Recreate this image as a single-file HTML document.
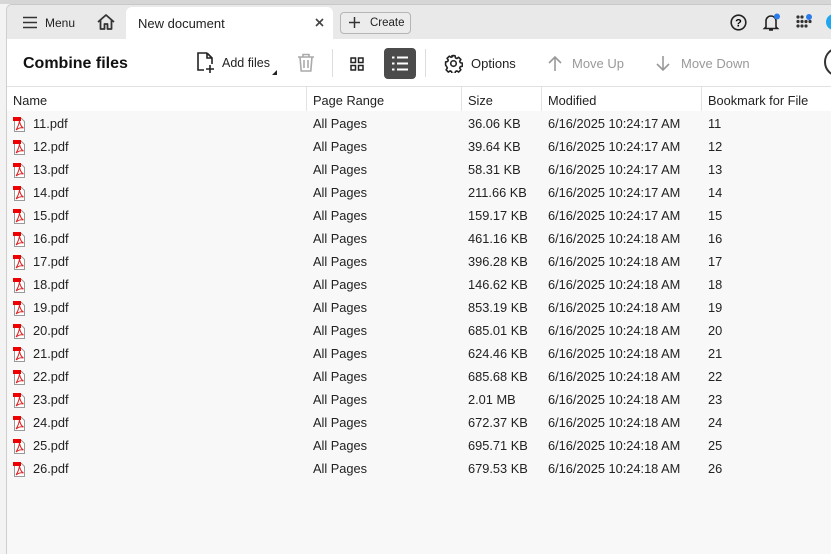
<!DOCTYPE html>
<html><head><meta charset="utf-8"><style>
*{margin:0;padding:0;box-sizing:border-box}
body{width:831px;height:547px;overflow:hidden;background:#f3f3f3;font-family:"Liberation Sans",sans-serif;position:relative;color:#222}
.abs{position:absolute}
#win{position:absolute;left:6px;top:4px;width:830px;height:550px;background:#f8f8f8;border-left:1px solid #cfcfcf;border-top:1px solid #c8c8c8;border-radius:6px 0 0 0;overflow:hidden}
#tabbar{position:absolute;left:0;top:0;width:100%;height:34px;background:#e9e9e9}
#tool{position:absolute;left:0;top:34px;width:100%;height:48px;background:#fff;border-bottom:1px solid #e1e1e1}
#hdr{position:absolute;left:0;top:82px;width:100%;height:24px;background:#fff}
.t{position:absolute;font-size:12.8px;white-space:nowrap}
.div{position:absolute;top:82px;width:1px;height:24px;background:#e3e3e3}
.ic{position:absolute;left:6px;width:13px;height:16px}
</style></head><body>
<div class="abs" style="left:0;top:0;width:831px;height:4px;background:#d6d6d6"></div>
<div id="win">
<div id="tabbar">
 <svg class="abs" style="left:15px;top:11px" width="16" height="13"><path d="M1 1.5h14M1 6.5h14M1 11.5h14" stroke="#333" stroke-width="1.6"/></svg>
 <div class="t" style="left:38px;top:11px;font-size:12px">Menu</div>
 <svg class="abs" style="left:89px;top:8px" width="20" height="18"><path d="M2 9L10 2l8 7M4.5 7v9h4v-5h3v5h4V7" fill="none" stroke="#333" stroke-width="1.8" stroke-linejoin="round"/></svg>
 <div class="abs" style="left:119px;top:2px;width:207px;height:33px;background:#fff;border-radius:6px 6px 0 0"></div>
 <div class="t" style="left:131px;top:11px;font-size:13px">New document</div>
 <svg class="abs" style="left:308px;top:13px" width="9" height="9"><path d="M1 1l7 7M8 1L1 8" stroke="#444" stroke-width="1.6"/></svg>
 <div class="abs" style="left:333px;top:7px;width:71px;height:22px;border:1px solid #b5b5b5;border-radius:4px;background:#ececec"></div>
 <svg class="abs" style="left:342px;top:12px" width="11" height="11"><path d="M5.5 0v11M0 5.5h11" stroke="#333" stroke-width="1.5"/></svg>
 <div class="t" style="left:363px;top:12px;font-size:11.5px">Create</div>
 <svg class="abs" style="left:723px;top:9px" width="17" height="17"><circle cx="8.5" cy="8.5" r="7.3" fill="none" stroke="#222" stroke-width="1.6"/><text x="8.5" y="12.5" font-size="11" font-weight="bold" text-anchor="middle" font-family="Liberation Sans">?</text></svg>
 <svg class="abs" style="left:755px;top:8px" width="20" height="20"><path d="M4 14V8a5 5 0 0 1 10 0v6l1.5 1.5h-13zM7 17h4" fill="none" stroke="#222" stroke-width="1.6"/><circle cx="15" cy="3.5" r="3" fill="#2b7ce9"/></svg>
 <svg class="abs" style="left:789px;top:9px" width="18" height="18"><g fill="#333"><circle cx="2" cy="3" r="1.6"/><circle cx="6" cy="3" r="1.6"/><circle cx="2" cy="7.5" r="1.6"/><circle cx="6" cy="7.5" r="1.6"/><circle cx="10" cy="7.5" r="1.6"/><circle cx="14" cy="7.5" r="1.6"/><circle cx="2" cy="12" r="1.6"/><circle cx="6" cy="12" r="1.6"/><circle cx="10" cy="12" r="1.6"/></g><circle cx="13" cy="3" r="3" fill="#2b7ce9"/></svg>
 <div class="abs" style="left:819px;top:9px;width:16px;height:16px;border-radius:50%;background:#1ea7f0"></div>
</div>
<div id="tool">
 <div class="t" style="left:16px;top:16px;font-size:16px;font-weight:bold;color:#111">Combine files</div>
 <svg class="abs" style="left:189px;top:13px" width="20" height="22"><path d="M11 1H2v17h6M11 1l5 5v6M11 1v5h5" fill="none" stroke="#222" stroke-width="1.6"/><path d="M14 13v8M10 17h8" stroke="#222" stroke-width="1.6"/></svg>
 <div class="t" style="left:215px;top:17px;font-size:12.5px">Add files</div>
 <svg class="abs" style="left:265px;top:31px" width="5" height="5"><path d="M5 0v5H0z" fill="#222"/></svg>
 <svg class="abs" style="left:290px;top:14px" width="18" height="20"><path d="M1 4h16M6 4V1.5h6V4M3 4l1.2 14h9.6L15 4M7 7v8M11 7v8" fill="none" stroke="#aaa" stroke-width="1.6"/></svg>
 <div class="abs" style="left:325px;top:10px;width:1px;height:28px;background:#ddd"></div>
 <svg class="abs" style="left:343px;top:18px" width="14" height="14"><g fill="none" stroke="#222" stroke-width="1.5"><rect x="1" y="1" width="4.5" height="4.5"/><rect x="8.5" y="1" width="4.5" height="4.5"/><rect x="1" y="8.5" width="4.5" height="4.5"/><rect x="8.5" y="8.5" width="4.5" height="4.5"/></g></svg>
 <div class="abs" style="left:377px;top:9px;width:32px;height:31px;background:#4b4b4b;border-radius:4px"></div>
 <svg class="abs" style="left:384px;top:16px" width="18" height="17"><g stroke="#fff" stroke-width="2"><path d="M1 2.5h2.5M6 2.5h11M1 8.5h2.5M6 8.5h11M1 14.5h2.5M6 14.5h11"/></g></svg>
 <div class="abs" style="left:418px;top:10px;width:1px;height:28px;background:#ddd"></div>
 <svg class="abs" style="left:437px;top:15px" width="19" height="19" viewBox="0 0 24 24"><path d="M12 2l2 .3.5 2.6 1.8.8 2.2-1.5 2.8 2.8-1.5 2.2.8 1.8 2.6.5v4l-2.6.5-.8 1.8 1.5 2.2-2.8 2.8-2.2-1.5-1.8.8-.5 2.6h-4l-.5-2.6-1.8-.8-2.2 1.5-2.8-2.8 1.5-2.2-.8-1.8L2 14v-4l2.6-.5.8-1.8-1.5-2.2 2.8-2.8 2.2 1.5 1.8-.8L10 2.3z" fill="none" stroke="#222" stroke-width="2" stroke-linejoin="round"/><circle cx="12" cy="12" r="3.5" fill="none" stroke="#222" stroke-width="2"/></svg>
 <div class="t" style="left:464px;top:17px;font-size:13px">Options</div>
 <svg class="abs" style="left:541px;top:16px" width="14" height="17"><path d="M7 16V2M1 8l6-6 6 6" fill="none" stroke="#999" stroke-width="1.6"/></svg>
 <div class="t" style="left:565px;top:17px;font-size:13px;color:#999">Move Up</div>
 <svg class="abs" style="left:649px;top:16px" width="14" height="17"><path d="M7 1v14M1 9l6 6 6-6" fill="none" stroke="#999" stroke-width="1.6"/></svg>
 <div class="t" style="left:674px;top:17px;font-size:13px;color:#999">Move Down</div>
 <div class="abs" style="left:817px;top:8px;width:30px;height:30px;border-radius:50%;border:2px solid #333"></div>
</div>
<div id="hdr"></div>
<div class="div" style="left:299px"></div><div class="div" style="left:454px"></div><div class="div" style="left:534px"></div><div class="div" style="left:694px"></div>
<div class="t" style="left:6px;top:88px">Name</div>
<div class="t" style="left:306px;top:88px">Page Range</div>
<div class="t" style="left:461px;top:88px">Size</div>
<div class="t" style="left:541px;top:88px">Modified</div>
<div class="t" style="left:701px;top:88px">Bookmark for File</div>
<div id="rows"></div>
</div>
<script>
var d=[["11","36.06 KB","17"],["12","39.64 KB","17"],["13","58.31 KB","17"],["14","211.66 KB","17"],["15","159.17 KB","17"],["16","461.16 KB","18"],["17","396.28 KB","18"],["18","146.62 KB","18"],["19","853.19 KB","18"],["20","685.01 KB","18"],["21","624.46 KB","18"],["22","685.68 KB","18"],["23","2.01 MB","18"],["24","672.37 KB","18"],["25","695.71 KB","18"],["26","679.53 KB","18"]];
var h="";d.forEach(function(r,i){var y=111+i*23;
h+='<svg class="ic" style="top:'+(y+1)+'px" viewBox="0 0 13 16"><path d="M1.5 1.5h7l3 3v10h-10z" fill="#fff" stroke="#999"/><rect x="0" y="0" width="8" height="4" fill="#e00"/><path d="M3 13c2-3 3-6 3.5-9 .5 3 2 6 4 7-2-.5-5 0-7.5 2z" fill="none" stroke="#d22" stroke-width="1"/></svg>'+
'<div class="t" style="left:26px;top:'+y+'px">'+r[0]+'.pdf</div><div class="t" style="left:306px;top:'+y+'px">All Pages</div><div class="t" style="left:461px;top:'+y+'px">'+r[1]+'</div><div class="t" style="left:541px;top:'+y+'px">6/16/2025 10:24:'+r[2]+' AM</div><div class="t" style="left:701px;top:'+y+'px">'+r[0]+'</div>';});
document.getElementById("rows").innerHTML=h;
</script>
</body></html>
